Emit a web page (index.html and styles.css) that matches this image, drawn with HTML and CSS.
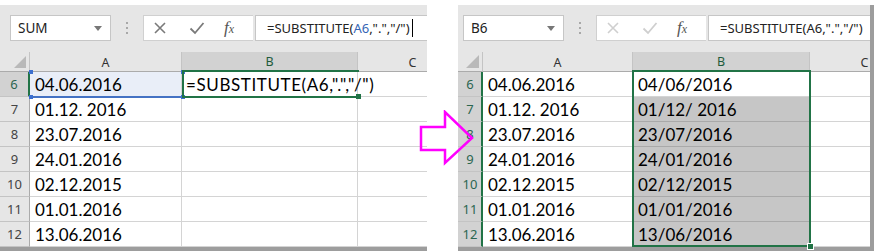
FILE: index.html
```html
<!DOCTYPE html>
<html>
<head>
<meta charset="utf-8">
<link rel="stylesheet" href="styles.css">
</head>
<body>
<div class="page">
  <div class="panel panel-left">
    <div class="toolbar">
      <div class="namebox"><span class="nb-text">SUM</span><span class="dd"></span></div>
      <div class="dots"><i></i><i></i><i></i></div>
      <div class="btns">
        <span class="btn-x active">
          <svg width="14" height="14" viewBox="0 0 14 14"><path d="M2 2 L12 12 M12 2 L2 12" stroke="currentColor" stroke-width="1.6" fill="none"/></svg>
        </span>
        <span class="btn-ok active">
          <svg width="16" height="14" viewBox="0 0 16 14"><path d="M1.5 7.5 L6 12 L14.5 2" stroke="currentColor" stroke-width="1.8" fill="none"/></svg>
        </span>
        <span class="fx"><i>f</i><i class="fx-x">x</i></span>
      </div>
      <div class="formula">=SUBSTITUTE(<span class="ref">A6</span>,".","/")<span class="caret"></span></div>
    </div>
    <div class="grid grid-left">
      <div class="corner"><span class="tri"></span></div>
      <div class="colh">A</div>
      <div class="colh sel">B</div>
      <div class="colh">C</div>

      <div class="rowh sel">6</div><div class="cell a6">04.06.2016</div><div class="cell edit">=SUBSTITUTE(A6,".","/")</div><div class="cell c"></div>
      <div class="rowh">7</div><div class="cell">01.12. 2016</div><div class="cell"></div><div class="cell c"></div>
      <div class="rowh">8</div><div class="cell">23.07.2016</div><div class="cell"></div><div class="cell c"></div>
      <div class="rowh">9</div><div class="cell">24.01.2016</div><div class="cell"></div><div class="cell c"></div>
      <div class="rowh">10</div><div class="cell">02.12.2015</div><div class="cell"></div><div class="cell c"></div>
      <div class="rowh">11</div><div class="cell">01.01.2016</div><div class="cell"></div><div class="cell c"></div>
      <div class="rowh">12</div><div class="cell">13.06.2016</div><div class="cell"></div><div class="cell c"></div>

      <div class="ref-box"><i class="sq tl"></i><i class="sq tr"></i><i class="sq bl"></i><i class="sq br"></i></div>
      <div class="edit-box"><i class="handle"></i></div>
    </div>
    <div class="bottom-band"></div>
  </div>

  <div class="panel panel-right">
    <div class="toolbar">
      <div class="namebox"><span class="nb-text">B6</span><span class="dd"></span></div>
      <div class="dots"><i></i><i></i><i></i></div>
      <div class="btns">
        <span class="btn-x">
          <svg width="14" height="14" viewBox="0 0 14 14"><path d="M2 2 L12 12 M12 2 L2 12" stroke="currentColor" stroke-width="1.6" fill="none"/></svg>
        </span>
        <span class="btn-ok">
          <svg width="16" height="14" viewBox="0 0 16 14"><path d="M1.5 7.5 L6 12 L14.5 2" stroke="currentColor" stroke-width="1.8" fill="none"/></svg>
        </span>
        <span class="fx"><i>f</i><i class="fx-x">x</i></span>
      </div>
      <div class="formula">=SUBSTITUTE(A6,".","/")</div>
    </div>
    <div class="grid grid-right">
      <div class="corner"><span class="tri"></span></div>
      <div class="colh">A</div>
      <div class="colh sel">B</div>
      <div class="colh">C</div>

      <div class="rowh sel">6</div><div class="cell">04.06.2016</div><div class="cell">04/06/2016</div><div class="cell c"></div>
      <div class="rowh sel">7</div><div class="cell">01.12. 2016</div><div class="cell hl">01/12/ 2016</div><div class="cell c"></div>
      <div class="rowh sel">8</div><div class="cell">23.07.2016</div><div class="cell hl">23/07/2016</div><div class="cell c"></div>
      <div class="rowh sel">9</div><div class="cell">24.01.2016</div><div class="cell hl">24/01/2016</div><div class="cell c"></div>
      <div class="rowh sel">10</div><div class="cell">02.12.2015</div><div class="cell hl">02/12/2015</div><div class="cell c"></div>
      <div class="rowh sel">11</div><div class="cell">01.01.2016</div><div class="cell hl">01/01/2016</div><div class="cell c"></div>
      <div class="rowh sel">12</div><div class="cell">13.06.2016</div><div class="cell hl">13/06/2016</div><div class="cell c"></div>

      <div class="sel-box"><i class="handle"></i></div>
    </div>
    <div class="bottom-band"></div>
  </div>

  <svg class="arrow" width="60" height="56" viewBox="418 110 60 56">
    <polygon points="421,127 445,127 445,112 472,138 445,163 445,150 421,150" fill="none" stroke="#ff00ff" stroke-width="2.5" stroke-linejoin="miter"/>
  </svg>
</div>
</body>
</html>
```

FILE: styles.css
```css
* { box-sizing: border-box; }
html, body { margin: 0; padding: 0; background: #fff; }
body { width: 874px; height: 251px; overflow: hidden; font-family: "Noto Sans", "Open Sans", sans-serif; }

.page {
  position: relative;
  display: flex;
  gap: 31px;
  padding-top: 5px;
  height: 251px;
}

.panel {
  display: flex;
  flex-direction: column;
  overflow: hidden;
  background: #fff;
}
.panel-left { width: 427px; }
.panel-right { width: 416px; border-right: 4px solid #9d9d9d; }

/* toolbar */
.toolbar {
  height: 47px;
  background: #e6e6e6;
  display: flex;
  align-items: flex-start;
  padding-top: 10px;
  flex: none;
}
.panel-left .toolbar { padding-left: 10px; }
.panel-right .toolbar { padding-left: 5px; }

.namebox {
  width: 101px;
  height: 26px;
  background: #fff;
  border: 1px solid #c6c6c6;
  display: flex;
  align-items: center;
  justify-content: space-between;
  padding: 0 8px 0 7px;
  font-size: 13.5px;
  color: #222;
  flex: none;
}
.dd {
  width: 0; height: 0;
  border-left: 4px solid transparent;
  border-right: 4px solid transparent;
  border-top: 5px solid #777;
  margin-top: 1px;
}
.dots {
  width: 32px;
  height: 26px;
  display: flex;
  flex-direction: column;
  align-items: center;
  justify-content: center;
  gap: 3px;
  flex: none;
}
.dots i { width: 2px; height: 2px; background: #a8a8a8; display: block; }

.btns {
  width: 110px;
  height: 26px;
  background: #fff;
  border: 1px solid #d0d0d0;
  border-right: none;
  display: flex;
  align-items: center;
  flex: none;
}
.btn-x { margin-left: 9px; color: #cfcfcf; display: flex; }
.btn-ok { margin-left: 22px; color: #cfcfcf; display: flex; }
.btn-x.active, .btn-ok.active { color: #7a7a7a; }
.fx {
  margin-left: 19px;
  font-family: "Liberation Serif", serif;
  font-size: 17px;
  color: #555;
  display: flex;
  align-items: baseline;
}
.fx i { font-style: italic; }
.fx .fx-x { font-size: 12px; margin-left: 0; }

.formula {
  margin-left: 2px;
  height: 26px;
  width: 260px;
  flex: none;
  background: #fff;
  border: 1px solid #c6c6c6;
  display: flex;
  align-items: center;
  padding-left: 11px;
  font-size: 13px;
  color: #222;
  white-space: nowrap;
}
.formula .ref { color: #3565b5; }
.caret { display: inline-block; width: 1px; height: 18px; background: #000; margin-left: 2px; }

/* grid */
.grid {
  position: relative;
  display: grid;
  grid-template-rows: 20px repeat(7, 25px);
  flex: none;
}
.grid-left { grid-template-columns: 30px 152px 176px 110px; }
.grid-right { grid-template-columns: 25px 150px 177px 110px; }

.corner {
  background: #e6e6e6;
  border-right: 1px solid #c4c4c4;
  border-bottom: 1px solid #ababab;
  position: relative;
}
.tri {
  position: absolute;
  right: 3px; bottom: 3px;
  width: 0; height: 0;
  border-left: 12px solid transparent;
  border-bottom: 12px solid #b9b9b9;
}
.grid-right .tri { border-left-width: 13px; border-bottom-width: 13px; }

.colh {
  background: #e6e6e6;
  border-right: 1px solid #c4c4c4;
  border-bottom: 1px solid #ababab;
  font-size: 12.5px;
  color: #333;
  display: flex;
  align-items: center;
  justify-content: center;
  padding-top: 1px;
}
.colh.sel {
  background: #d2d2d2;
  border-bottom: 2px solid #217346;
  color: #1f5b3c;
}

.rowh {
  background: #e6e6e6;
  border-right: 1px solid #ababab;
  border-bottom: 1px solid #c4c4c4;
  font-size: 13px;
  color: #444;
  display: flex;
  align-items: center;
  justify-content: center;
}
.rowh.sel {
  background: #d2d2d2;
  border-right: 2px solid #217346;
  color: #2b6650;
}
.grid-right .rowh { padding-left: 1px; }

.cell {
  border-right: 1px solid #d4d4d4;
  border-bottom: 1px solid #d4d4d4;
  font-family: Lato, "Liberation Sans", sans-serif;
  font-size: 17px;
  color: #000;
  display: flex;
  align-items: center;
  padding-left: 5px;
  white-space: nowrap;
}
.cell.c { border-right: none; }
.cell.a6 { background: #e9eef8; }
.cell.edit { overflow: visible; position: relative; z-index: 1; padding-left: 4px; letter-spacing: 0.6px; }
.cell.hl { background: #c6c6c6; border-bottom-color: #a9a9a9; }

.bottom-band { height: 8px; background: #9d9d9d; flex: none; }

/* overlays */
.ref-box {
  position: absolute;
  left: 30px; top: 19px;
  width: 153px; height: 27px;
  border-bottom: 2px solid #4472c4;
  z-index: 2;
}
.sq { position: absolute; width: 4px; height: 4px; background: #3c6fd0; display: block; }
.sq.tl { left: -1px; top: -1px; }
.sq.tr { right: -2px; top: -1px; }
.sq.bl { left: -1px; bottom: -3px; }
.sq.br { right: -2px; bottom: -3px; }

.edit-box {
  position: absolute;
  left: 182px; top: 18px;
  width: 177px; height: 28px;
  border: 2px solid #217346;
  border-right: none;
  z-index: 2;
}
.edit-box .handle {
  position: absolute; right: -2px; bottom: -3px;
  width: 5px; height: 5px; background: #217346; display: block;
}

.sel-box {
  position: absolute;
  left: 174px; top: 18px;
  width: 179px; height: 177px;
  border: 2px solid #217346;
  z-index: 2;
}
.sel-box .handle {
  position: absolute; right: -5px; bottom: -5px;
  width: 7px; height: 7px; background: #217346;
  border: 1px solid #fff; display: block;
}

.arrow { position: absolute; left: 418px; top: 110px; z-index: 5; }
```
